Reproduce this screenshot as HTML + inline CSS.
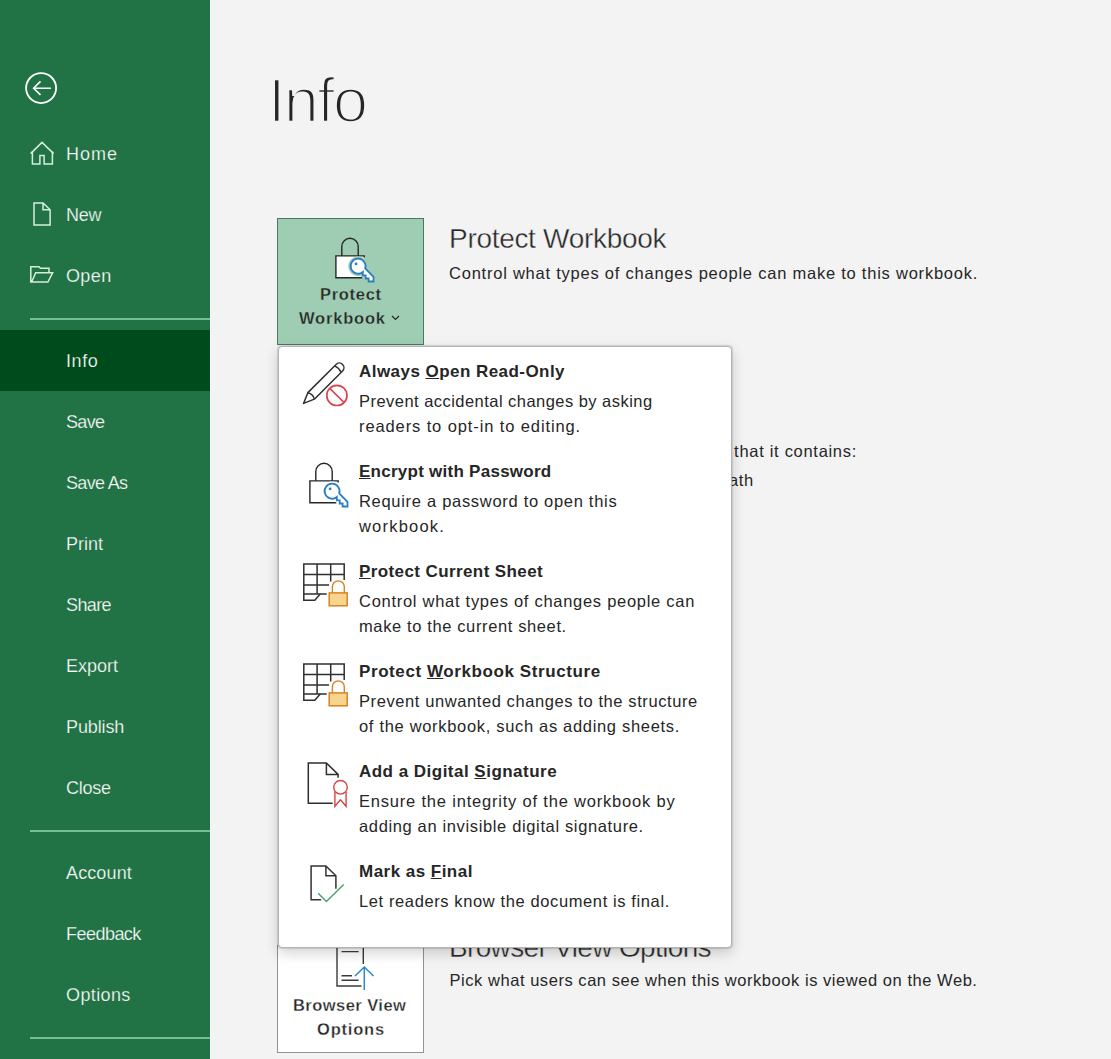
<!DOCTYPE html>
<html><head><meta charset="utf-8">
<style>
*{margin:0;padding:0;box-sizing:border-box}
html,body{width:1111px;height:1059px;overflow:hidden;background:#f3f3f3;font-family:"Liberation Sans",sans-serif}
.abs{position:absolute;white-space:nowrap}
#side{position:absolute;left:0;top:0;width:210px;height:1059px;background:#217346}
.nav{position:absolute;left:66px;font-size:18px;line-height:20px;color:#fff;white-space:nowrap;-webkit-text-stroke:0.25px #217346}
.sep{position:absolute;left:30px;width:180px;height:2px;background:#74be91}
#sel{position:absolute;left:0;top:330px;width:210px;height:61px;background:#004b1c}
.ico{position:absolute;overflow:visible}
.t{position:absolute;white-space:nowrap;color:#262626}
.desc{font-size:16.5px;line-height:20px;letter-spacing:0.7px}
#panel{position:absolute;z-index:2;left:278px;top:346px;width:454px;height:602px;background:#fff;border:1px solid #b3b3b3;border-radius:4px;box-shadow:0 0 1px 0.5px rgba(0,0,0,0.12),0 5px 14px rgba(0,0,0,0.18)}
.it{position:absolute;left:80px;white-space:nowrap;color:#262626}
.ti{font-weight:bold;font-size:17px;line-height:20px;letter-spacing:0px}
.de{font-size:16.5px;line-height:25px;letter-spacing:0px}
u{text-decoration:underline;text-underline-offset:1px;text-decoration-thickness:1px}
.btn{position:absolute;left:277px;width:147px;border:1px solid #4a7a5e;background:#9fcdb3}
.btxt{position:absolute;-webkit-text-stroke:0.3px #9fcdb3;font-weight:bold;font-size:16.5px;line-height:24px;color:#262626;white-space:nowrap}
</style></head><body>
<div style="position:absolute;left:210px;top:0;width:1px;height:1059px;background:#f9fdf9"></div>
<div id="side">
  <svg class="ico" style="left:0;top:0" width="210" height="300" viewBox="0 0 210 300">
    <circle cx="41.1" cy="88.1" r="15" fill="none" stroke="#fff" stroke-width="1.8"/>
    <path d="M33.3 88.2 H50.9 M40.5 81.4 L33.6 88.2 L40.5 94.9" fill="none" stroke="#fff" stroke-width="1.6"/>
    <g fill="none" stroke="#d6efdd" stroke-width="1.5" stroke-linejoin="miter">
      <path d="M30.6 153.6 L42 142.4 L53.6 153.6"/>
      <path d="M32.4 151.6 V164 H39.9 V155.4 H44.1 V164 H52.4 V151.6"/>
      <path d="M34 203 H43 L50.1 209.8 V224.9 H34 Z M43 203 V209.8 H50.1"/>
      <path d="M49 272.6 V268.2 H40.5 L39 266.8 H30.8 V282 H47.9 L52.6 272.8 H35.7 L31.6 282"/>
    </g>
  </svg>
  <div class="nav" style="top:144px;letter-spacing:1.0px">Home</div>
  <div class="nav" style="top:205px;letter-spacing:-0.2px">New</div>
  <div class="nav" style="top:266px;letter-spacing:0.37px">Open</div>
  <div class="sep" style="top:318px"></div>
  <div id="sel"></div>
  <div class="nav" style="top:351px;letter-spacing:0.6px;-webkit-text-stroke-color:#004b1c">Info</div>
  <div class="nav" style="top:412px;letter-spacing:-0.67px">Save</div>
  <div class="nav" style="top:473px;letter-spacing:-0.67px">Save As</div>
  <div class="nav" style="top:534px;letter-spacing:0px">Print</div>
  <div class="nav" style="top:595px;letter-spacing:-0.6px">Share</div>
  <div class="nav" style="top:656px;letter-spacing:0px">Export</div>
  <div class="nav" style="top:717px;letter-spacing:-0.12px">Publish</div>
  <div class="nav" style="top:778px;letter-spacing:-0.27px">Close</div>
  <div class="sep" style="top:830px"></div>
  <div class="nav" style="top:863px;letter-spacing:0.12px">Account</div>
  <div class="nav" style="top:924px;letter-spacing:-0.53px">Feedback</div>
  <div class="nav" style="top:985px;letter-spacing:0.38px">Options</div>
  <div class="sep" style="top:1037px"></div>
</div>

<div class="t" style="left:268px;top:64px;font-size:63px;line-height:72px;letter-spacing:-1.7px;-webkit-text-stroke:2.4px #f3f3f3">Info</div>

<!-- Protect workbook -->
<div class="btn" style="top:218px;height:127px">
  <div class="btxt" style="left:42px;top:63px;letter-spacing:0.7px">Protect</div>
  <div class="btxt" style="left:21px;top:87px;letter-spacing:0.8px">Workbook</div>
</div>
<div class="t" style="left:449px;top:223px;font-size:28px;line-height:32px;letter-spacing:-0.3px;-webkit-text-stroke:0.4px #f3f3f3">Protect Workbook</div>
<div class="t desc" style="left:449px;top:263px;letter-spacing:0.77px">Control what types of changes people can make to this workbook.</div>

<div class="t desc" style="right:254px;top:441px">be aware that it contains:</div>
<div class="t desc" style="right:357px;top:470px">absolute path</div>

<!-- Browser view options -->
<div class="btn" style="top:945px;height:108px;background:#fff;border-color:#939393">
  <div class="btxt" style="left:15px;top:47px;letter-spacing:0.45px;-webkit-text-stroke-color:#fff">Browser View</div>
  <div class="btxt" style="left:39px;top:71px;letter-spacing:0.8px;-webkit-text-stroke-color:#fff">Options</div>
</div>
<div class="t" style="left:449px;top:932px;font-size:28px;line-height:32px;letter-spacing:-0.65px;-webkit-text-stroke:0.4px #f3f3f3">Browser View Options</div>
<div class="t desc" style="left:449.5px;top:970px;letter-spacing:0.545px">Pick what users can see when this workbook is viewed on the Web.</div>

<svg class="ico" style="left:0;top:0;z-index:1" width="1111" height="1059" viewBox="0 0 1111 1059">
  <defs>
    <g id="lockkey">
      <path d="M341.8 255.9 V246.5 A8.2 8.2 0 0 1 358.2 246.5 V255.9" fill="none" stroke="#262626" stroke-width="1.4"/>
      <rect x="335.9" y="255.9" width="28.3" height="21.9" fill="#fff"/>
      <path d="M364.2 257.6 V255.9 H335.9 V277.8 H362.4" fill="none" stroke="#262626" stroke-width="1.4"/>
      <path d="M362.85 272 A7.5 7.5 0 1 1 365.23 268.5 L373.5 276.8 V281.5 H368.6 V278.5 H365.7 V275.3 H362.85 Z" fill="#fff" stroke="var(--halo)" stroke-width="4.6" stroke-linejoin="round"/>
      <path d="M362.85 272 A7.5 7.5 0 1 1 365.23 268.5 L373.5 276.8 V281.5 H368.6 V278.5 H365.7 V275.3 H362.85 Z" fill="#fff" stroke="#2a7fc2" stroke-width="1.8" stroke-linejoin="miter"/>
      <circle cx="356.1" cy="263.9" r="1.4" fill="#2a7fc2"/>
    </g>
  </defs>
  <use href="#lockkey" style="--halo:#9fcdb3"/>
  <path d="M392 316 L395.5 319.5 L399 316" fill="none" stroke="#262626" stroke-width="1.2"/>
  <!-- browser view icon -->
  <g fill="none" stroke="#3a3a3a" stroke-width="1.4">
    <path d="M337 930 V986 H361.5 M363.3 930 V964"/>
    <path d="M341.5 951.6 H358.6 M341.5 975.8 H352 M341.5 980.2 H358.6"/>
  </g>
  <path d="M364.3 990 V967.5 M355 976 L364.3 967 L373.5 976" fill="none" stroke="#2b88c8" stroke-width="1.5"/>
</svg>
<div id="panel">
  <div class="it ti" style="top:15px;letter-spacing:0.45px">Always <u>O</u>pen Read-Only</div>
  <div class="it de" style="top:42px;letter-spacing:0.46px">Prevent accidental changes by asking</div>
  <div class="it de" style="top:67px;letter-spacing:0.89px">readers to opt-in to editing.</div>
  <div class="it ti" style="top:115px;letter-spacing:0.26px"><u>E</u>ncrypt with Password</div>
  <div class="it de" style="top:142px;letter-spacing:0.7px">Require a password to open this</div>
  <div class="it de" style="top:167px;letter-spacing:1.2px">workbook.</div>
  <div class="it ti" style="top:215px;letter-spacing:0.4px"><u>P</u>rotect Current Sheet</div>
  <div class="it de" style="top:242px;letter-spacing:0.72px">Control what types of changes people can</div>
  <div class="it de" style="top:267px;letter-spacing:0.62px">make to the current sheet.</div>
  <div class="it ti" style="top:315px;letter-spacing:0.59px">Protect <u>W</u>orkbook Structure</div>
  <div class="it de" style="top:342px;letter-spacing:0.59px">Prevent unwanted changes to the structure</div>
  <div class="it de" style="top:367px;letter-spacing:0.68px">of the workbook, such as adding sheets.</div>
  <div class="it ti" style="top:415px;letter-spacing:0.48px">Add a Digital <u>S</u>ignature</div>
  <div class="it de" style="top:442px;letter-spacing:0.8px">Ensure the integrity of the workbook by</div>
  <div class="it de" style="top:467px;letter-spacing:0.64px">adding an invisible digital signature.</div>
  <div class="it ti" style="top:515px;letter-spacing:0.47px">Mark as <u>F</u>inal</div>
  <div class="it de" style="top:542px;letter-spacing:0.61px">Let readers know the document is final.</div>
</div>
<svg class="ico" style="left:0;top:0;z-index:3" width="1111" height="1059" viewBox="0 0 1111 1059">
  <!-- pencil -->
  <g transform="translate(303.6 403.4) rotate(-45)" fill="none" stroke="#2f2f2f" stroke-width="1.5" stroke-linejoin="round">
    <path d="M0 0 L10.6 -4.6 L50.5 -4.6 A4.6 4.6 0 0 1 50.5 4.6 L10.6 4.6 Z" fill="#fff"/>
    <path d="M10.6 -4.6 Q13.6 0 10.6 4.6 M48.5 -4.6 Q50.3 0 48.5 4.6"/>
  </g>
  <circle cx="336.9" cy="395.4" r="10.1" fill="#fff" stroke="#d9444a" stroke-width="1.7"/>
  <path d="M329.8 388.3 L344 402.5" stroke="#d9444a" stroke-width="1.7"/>
  <use href="#lockkey" transform="translate(-26 225)" style="--halo:#fff"/>
  <!-- sheets -->
  <g id="sheet">
    <g fill="none" stroke="#2f2f2f" stroke-width="1.5">
      <path d="M344.2 580 V564.1 H303.8 V600.3 H314.8 L320.2 594.1 H326.7"/>
      <path d="M317.1 564.1 V594.1 M330.7 564.1 V581.6 M303.8 574.5 H344.2 M303.8 585 H329 M303.8 594.1 H320.2"/>
    </g>
    <path d="M332.4 592.9 V586.8 A5.95 5.95 0 0 1 344.3 586.8 V592.9" fill="none" stroke="#d9821f" stroke-width="1.4"/>
    <rect x="329.2" y="592.9" width="18" height="12.9" fill="#f9d48e" stroke="#d9821f" stroke-width="1.5"/>
  </g>
  <use href="#sheet" transform="translate(0 100)"/>
  <!-- signature -->
  <g fill="none" stroke="#2f2f2f" stroke-width="1.5">
    <path d="M338.1 777.7 V774.4 L326.4 762.9 H308.3 V803.2 H332.7 M326.4 762.9 V774.4 H338.1"/>
  </g>
  <g fill="#fff" stroke="#d64545" stroke-width="1.4">
    <path d="M334.9 791.5 V806.3 L340.5 799.8 L346.1 806.3 V791.5"/>
    <circle cx="340.5" cy="787.3" r="6.8"/>
  </g>
  <!-- final -->
  <g fill="none" stroke="#333" stroke-width="1.5">
    <path d="M335.9 888.7 V875.8 L325.9 866 H311.1 V899.8 H321.1 M325.9 866 V875.8 H335.9"/>
  </g>
  <path d="M318.2 893.2 L326.4 901.5 L343.7 884.5" fill="none" stroke="#45a46a" stroke-width="1.4"/>
</svg>
</body></html>
